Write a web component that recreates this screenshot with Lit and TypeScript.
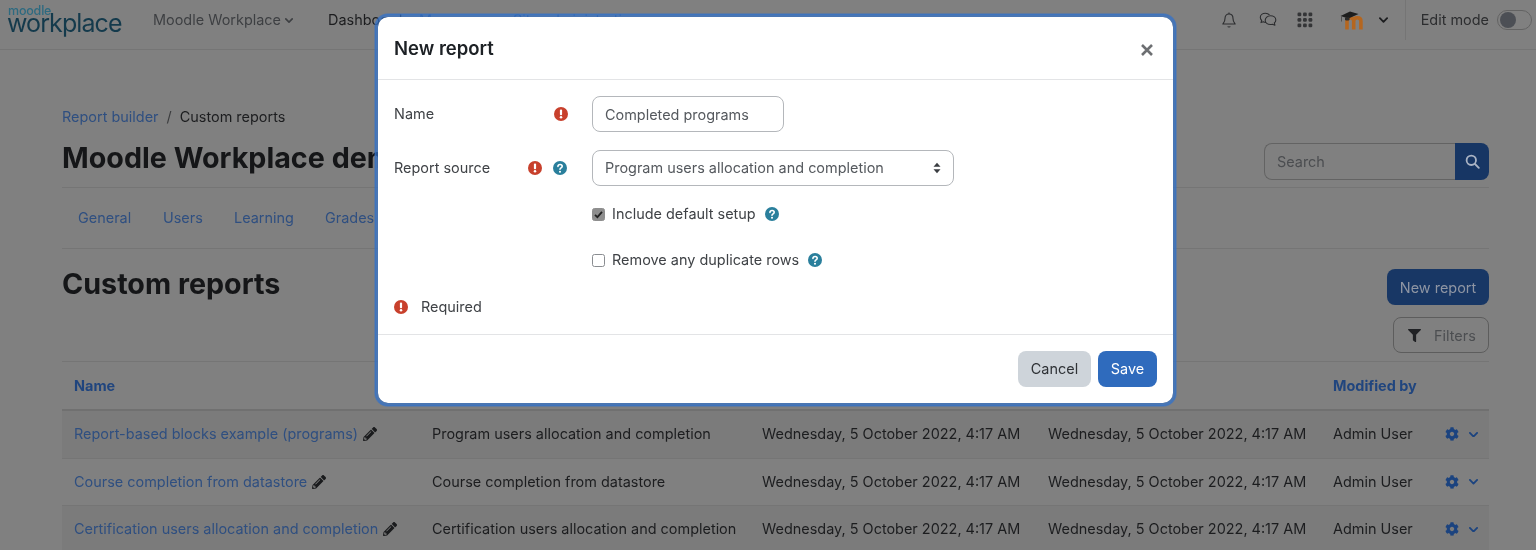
import { LitElement, html, css, svg } from "lit";
import { customElement } from "lit/decorators.js";

const GEAR = "M487.4 315.7l-42.6-24.6c4.3-23.2 4.3-47 0-70.2l42.6-24.6c4.9-2.8 7.1-8.6 5.5-14-11.1-35.6-30-67.8-54.7-94.6-3.8-4.1-10-5.1-14.8-2.3L380.8 110c-17.9-15.4-38.5-27.3-60.8-35.1V25.8c0-5.6-3.9-10.5-9.4-11.7-36.7-8.2-74.3-7.8-109.2 0-5.5 1.2-9.4 6.1-9.4 11.7V75c-22.2 7.9-42.8 19.8-60.8 35.1L88.7 85.5c-4.9-2.8-11-1.9-14.8 2.3-24.7 26.7-43.6 58.9-54.7 94.6-1.7 5.4.6 11.2 5.5 14L67.3 221c-4.3 23.2-4.3 47 0 70.2l-42.6 24.6c-4.9 2.8-7.1 8.6-5.5 14 11.1 35.6 30 67.8 54.7 94.6 3.8 4.1 10 5.1 14.8 2.3l42.6-24.6c17.9 15.4 38.5 27.3 60.8 35.1v49.2c0 5.6 3.9 10.5 9.4 11.7 36.7 8.2 74.3 7.8 109.2 0 5.5-1.2 9.4-6.1 9.4-11.7v-49.2c22.2-7.9 42.8-19.8 60.8-35.1l42.6 24.6c4.9 2.8 11 1.9 14.8-2.3 24.7-26.7 43.6-58.9 54.7-94.6 1.5-5.5-.7-11.3-5.6-14.1zM256 336c-44.1 0-80-35.9-80-80s35.9-80 80-80 80 35.9 80 80-35.9 80-80 80z";
const PENCIL = "M497.9 142.1l-46.1 46.1c-4.7 4.7-12.3 4.7-17 0l-111-111c-4.7-4.7-4.7-12.3 0-17l46.1-46.1c18.7-18.7 49.1-18.7 67.9 0l60.1 60.1c18.8 18.7 18.8 49.1 0 67.9zM284.2 99.8L21.6 362.4.4 483.9c-2.9 16.4 11.4 30.6 27.8 27.8l121.5-21.3 262.6-262.6c4.7-4.7 4.7-12.3 0-17l-111-111c-4.8-4.7-12.4-4.7-17.1 0zM124.1 339.9c-5.5-5.5-5.5-14.3 0-19.8l154-154c5.5-5.5 14.3-5.5 19.8 0s5.5 14.3 0 19.8l-154 154c-5.5 5.5-14.3 5.5-19.8 0zM88 424h48v36.3l-64.5 11.3-31.1-31.1L51.7 376H88v48z";
const FILTER = "M487.976 0H24.028C2.71 0-8.047 25.866 7.058 40.971L192 225.941V432c0 7.831 3.821 15.17 10.237 19.662l80 55.98C298.02 518.69 320 507.493 320 487.98V225.941l184.947-184.97C520.021 25.896 509.338 0 487.976 0z";

const chevron = (cls: string) => html`<svg class=${cls} viewBox="0 0 10 6" fill="none" stroke="currentColor" stroke-width="2" stroke-linecap="round" stroke-linejoin="round"><path d="M1 1l4 4 4-4" /></svg>`;
const errIcon = html`<svg class="ico14" viewBox="0 0 14 14"><circle cx="7" cy="7" r="7" fill="#c8402c" /><rect x="5.9" y="2.6" width="2.2" height="5.6" rx="1" fill="#fff" /><circle cx="7" cy="10.3" r="1.25" fill="#fff" /></svg>`;
const helpIcon = html`<svg class="ico14" viewBox="0 0 14 14"><circle cx="7" cy="7" r="7" fill="#2a7f9c" /><path d="M4.9 5.4c.1-1.2 1-1.9 2.2-1.9 1.2 0 2.1.8 2.1 1.8 0 1.6-2.2 1.5-2.2 3" fill="none" stroke="#fff" stroke-width="1.6" stroke-linecap="round" /><circle cx="7" cy="10.7" r="1.05" fill="#fff" /></svg>`;

const ROWS = [
  ["Report-based blocks example (programs)", "Program users allocation and completion"],
  ["Course completion from datastore", "Course completion from datastore"],
  ["Certification users allocation and completion", "Certification users allocation and completion"],
];
const DATE = "Wednesday, 5 October 2022, 4:17 AM";

@customElement("app-root")
export class AppRoot extends LitElement {
  static styles = css`
    :host {
      display: block;
      position: relative;
      height: 550px;
      overflow: hidden;
      background: #808080;
      color: #1c1d1f;
      font-family: Inter, "Liberation Sans", sans-serif;
      font-size: 14.45px;
      line-height: 22px;
    }
    * { box-sizing: border-box; }
    svg { display: block; flex: none; }
    .ico14 { width: 14px; height: 14px; }
    .soft { filter: blur(0.35px); }

    /* top bar */
    .top {
      height: 50px;
      border-bottom: 1px solid #757575;
      display: flex;
      align-items: flex-start;
      padding-left: 7px;
    }
    .logo { width: 146px; height: 40px; color: #12384a; }
    .logo .small {
      display: block; font-size: 12.5px; line-height: 12px; color: #2d6a80; margin-top: 5px; letter-spacing: -.2px; font-weight: 500; padding-left: 1px;
    }
    .logo .big {
      display: block; font-size: 25px; line-height: 20px; letter-spacing: -.9px; margin-top: -4px; color: #143a4c;
    }
    .brand { display: flex; align-items: center; gap: 4px; height: 40px; color: #3d3f42; width: 175px; }
    .chev-nav { width: 8px; height: 5px; }
    .nav { display: flex; height: 40px; align-items: center; color: #1c1d1f; }
    .nav a.d { width: 91px; }
    .nav a.m { width: 94px; color: #2f4f80; }
    .nav a.s { color: #2f4f80; }
    .right { margin-left: auto; display: flex; align-items: center; height: 40px; color: #2c2d2f; }
    .right .bell { width: 14px; height: 17px; margin-right: 23px; }
    .right .chat { width: 18px; height: 17px; margin-right: 20px; }
    .right .apps { width: 16px; height: 16px; margin-right: 27px; }
    .right .mlogo { width: 26px; height: 20px; margin-right: 13px; }
    .right .chev-user { width: 9px; height: 6px; margin-right: 17px; color: #1c1d1f; }
    .divider { width: 1px; height: 40px; background: #757575; margin-right: 15px; }
    .edit { margin-right: 8px; color: #2c2d2f; }
    .toggle {
      width: 35px; height: 20px; border-radius: 10px; border: 1px solid #636363; margin-right: 4px; padding: 1px 0 0 2px;
    }
    .toggle i { display: block; width: 16px; height: 16px; border-radius: 50%; background: #4c4f55; }

    /* page */
    main { padding: 0 47px 0 62px; }
    .crumbs { margin-top: 56px; display: flex; gap: 8px; height: 22px; align-items: center; }
    .crumbs a { color: #2f4f80; }
    .crumbs span { color: #3a3b3d; }
    .crumbs b { font-weight: 400; color: #1c1d1f; }
    .titlebar { display: flex; justify-content: space-between; align-items: center; height: 44px; margin-top: 8px; }
    h1 { margin: 0; font-size: 28.7px; line-height: 36px; font-weight: 700; color: #151618; white-space: nowrap; }
    .search { display: flex; width: 225px; height: 37px; margin-top: 6px; }
    .search .in {
      flex: 1; border: 1px solid #636363; border-right: 0; border-radius: 8px 0 0 8px; padding: 1px 12px 0; display: flex; align-items: center; color: #4b4d50;
    }
    .search .btn {
      width: 34px; background: #173664; border-radius: 0 8px 8px 0; display: flex; align-items: center; justify-content: center;
    }
    .search svg { width: 15px; height: 15px; }
    .tabs {
      margin-top: 7px; border-top: 1px solid #757575; border-bottom: 1px solid #757575; height: 62px; display: flex; align-items: center; padding-left: 16px; color: #2f4f80; padding-bottom: 1px;
    }
    .tabs a:nth-child(1) { width: 85px; }
    .tabs a:nth-child(2) { width: 71px; }
    .tabs a:nth-child(3) { width: 91px; }
    .headrow { display: flex; justify-content: space-between; margin-top: 20px; height: 84px; }
    .headrow h1 { margin-top: -3px; }
    .actions { display: flex; flex-direction: column; align-items: flex-end; gap: 12px; }
    .btn-new {
      width: 102px; height: 36px; padding-top: 1px; background: #183765; color: #8e95a3; border-radius: 8px; display: flex; align-items: center; justify-content: center;
    }
    .btn-filter {
      width: 96px; height: 36px; border: 1px solid #5d5d5d; border-radius: 8px; display: flex; align-items: center; gap: 13px; padding: 1px 0 0 14px; color: #4c4e51;
    }
    .btn-filter svg { width: 13px; height: 13px; color: #202124; }
    .table { margin-top: 8px; }
    .tr { display: grid; grid-template-columns: 358px 330px 286px 285px 112px 56px; }
    .thead { height: 50px; border-top: 1px solid #757575; border-bottom: 2px solid #707070; align-items: center; color: #20457e; font-weight: 700; }
    .td { padding-left: 12px; white-space: nowrap; display: flex; align-items: center; gap: 5px; }
    .row { height: 47.5px; border-bottom: 1px solid #757575; align-items: center; }
    .row.odd { background: #7b7b7b; }
    .row a { color: #2f4f80; }
    .pencil { width: 14px; height: 14px; color: #1a1b1d; }
    .gear { width: 14px; height: 14px; color: #1b437f; }
    .chev-act { width: 9px; height: 5.5px; color: #1b437f; }
    .row .act { gap: 10px; }

    /* dialog */
    .modal {
      position: absolute; left: 375px; top: 14px; width: 801px; height: 392px;
      border: 3px solid rgba(51, 114, 201, .7); border-radius: 13px; background: #fff; background-clip: padding-box; display: flex; flex-direction: column; color: #3f4246;
      box-shadow: 0 0 0 .75px rgba(51, 114, 201, .5);
    }
    .mhead {
      height: 63px; flex: none; border-bottom: 1px solid #e3e4e6; display: flex; align-items: center; justify-content: space-between; padding: 0 20px 0 16px;
    }
    .mhead h2 { margin: 0; font-size: 18.5px; font-weight: 600; color: #1d2125; }
    .mhead svg { width: 12px; height: 12px; margin-top: 4px; }
    .mbody { flex: 1; padding: 16px 16px 0; display: flex; flex-direction: column; }
    .frow { display: grid; grid-template-columns: 198px auto; }
    .frow.input { height: 36px; align-items: center; margin-bottom: 18px; }
    .frow.input.last { margin-bottom: 17px; }
    .frow.check { height: 22px; align-items: center; margin-bottom: 24px; }
    .lab { display: flex; align-items: center; gap: 11px; padding-right: 24px; }
    .lab.two { padding-right: 25px; }
    .lab span { margin-right: auto; }
    .field {
      height: 36px; border: 1px solid #b4b7bb; border-radius: 8px; display: flex; align-items: center; padding: 0 12px; color: #55595e;
    }
    .f-name { width: 192px; padding-top: 1px; }
    .f-src { width: 362px; justify-content: space-between; }
    .f-src svg { width: 8px; height: 12px; }
    .cb { display: flex; align-items: center; gap: 7px; }
    .box { width: 13px; height: 13px; border-radius: 2.5px; border: 1px solid #8a8d91; background: #fff; }
    .box.on { background: #8e8e8e; border-color: #8e8e8e; display: flex; align-items: center; justify-content: center; }
    .box svg { width: 11px; height: 11px; }
    .cb .h { margin-left: 2px; }
    .req { display: flex; align-items: center; gap: 13px; height: 22px; margin-top: 1px; }
    .mfoot {
      height: 69px; flex: none; border-top: 1px solid #e3e4e6; display: flex; justify-content: flex-end; align-items: center; gap: 7px; padding: 0 16px;
    }
    .b { height: 36px; border-radius: 8px; display: flex; align-items: center; justify-content: center; }
    .cancel { width: 73px; background: #ced4da; color: #2f3236; }
    .save { width: 59px; background: #2f6bbd; color: #fff; }
  `;

  render() {
    return html`
      <div class="soft">
      <header class="top">
        <div class="logo"><span class="small">moodle</span><span class="big">workplace</span></div>
        <div class="brand">Moodle Workplace ${chevron("chev-nav")}</div>
        <nav class="nav"><a class="d">Dashboard</a><a class="m">My courses</a><a class="s">Site administration</a></nav>
        <div class="right">
          <svg class="bell" viewBox="0 0 14 17" fill="none" stroke="currentColor" stroke-width="1.1" stroke-linejoin="round"><path d="M7 2c-2.6 0-4 2-4 4.4 0 3.4-1.6 4.6-2.2 5.6h12.4c-.6-1-2.2-2.2-2.2-5.6C11 4 9.600 2 7 2z"/><path d="M7 .6V2M5.800 14.300c.3 1 2.100 1 2.400 0"/></svg>
          <svg class="chat" viewBox="0 0 18 17" fill="none" stroke="currentColor" stroke-width="1.1" stroke-linejoin="round"><path d="M7 10.500c-1-.1-1.900-.3-2.600-.7l-2.400.8.700-2.100C1.900 7.700 1.300 6.500 1.300 5.300 1.300 3 3.600 1.200 6.400 1.200c1.700 0 3.200.7 4.100 1.700"/><path d="M11.500 3.800c3 0 5.300 1.800 5.300 4.100 0 1.200-.6 2.300-1.500 3l.6 2.300-2.500-1c-.6.2-1.200.3-1.900.3-3 0-5.300-1.900-5.300-4.200s2.300-4.500 5.300-4.500z"/></svg>
          <svg class="apps" viewBox="0 0 16 16" fill="#343537">
            ${[0.5, 6, 11.5].flatMap((y) => [0.5, 6, 11.5].map((x) => svg`<rect x=${x} y=${y} width="3.800" height="3.800" rx="1.300" />`))}
          </svg>
          <svg class="mlogo" viewBox="0 0 26 20"><path d="M7 19.500v-8.500c0-2.200 1.400-3.300 3.300-3.300s3.400 1.100 3.400 3.300v8.500M13.700 11c0-2.200 1.600-3.300 3.600-3.300s3.600 1.100 3.600 3.300v8.500" fill="none" stroke="#b5661f" stroke-width="3.600"/><path d="M.5 6 10 1.500 18.500 4 8.500 8.500z" fill="#1d1d1d"/><path d="M5 7.500v2.500c1.500.8 3 .8 4.500 0V7z" fill="#2a2a2a"/><path d="M1.500 6.500v5" stroke="#444" stroke-width=".8"/></svg>
          ${chevron("chev-user")}
          <div class="divider"></div>
          <span class="edit">Edit mode</span>
          <div class="toggle"><i></i></div>
        </div>
      </header>

      <main>
        <div class="crumbs"><a>Report builder</a><span>/</span><b>Custom reports</b></div>
        <div class="titlebar">
          <h1>Moodle Workplace demo</h1>
          <div class="search">
            <div class="in">Search</div>
            <div class="btn"><svg viewBox="0 0 15 15" fill="none" stroke="#a9b3c4" stroke-width="1.800" stroke-linecap="round"><circle cx="6.300" cy="6.300" r="4.700"/><path d="M10 10l3.800 3.800"/></svg></div>
          </div>
        </div>
        <div class="tabs"><a>General</a><a>Users</a><a>Learning</a><a>Grades</a></div>
        <div class="headrow">
          <h1>Custom reports</h1>
          <div class="actions">
            <div class="btn-new">New report</div>
            <div class="btn-filter"><svg viewBox="0 0 512 512" fill="currentColor"><path d=${FILTER} /></svg>Filters</div>
          </div>
        </div>
        <div class="table">
          <div class="tr thead">
            <div class="td">Name</div><div class="td"></div><div class="td"></div><div class="td"></div><div class="td">Modified by</div><div class="td"></div>
          </div>
          ${ROWS.map(
            (r, i) => html`<div class="tr row ${i % 2 === 0 ? "odd" : ""}">
              <div class="td"><a>${r[0]}</a><svg class="pencil" viewBox="0 0 512 512" fill="currentColor"><path d=${PENCIL} /></svg></div>
              <div class="td">${r[1]}</div>
              <div class="td">${DATE}</div>
              <div class="td">${DATE}</div>
              <div class="td">Admin User</div>
              <div class="td act"><svg class="gear" viewBox="0 0 512 512" fill="currentColor"><path d=${GEAR} /></svg>${chevron("chev-act")}</div>
            </div>`
          )}
        </div>
      </main>

      <div class="modal">
        <div class="mhead">
          <h2>New report</h2>
          <svg viewBox="0 0 12 12" fill="none" stroke="#6d6f72" stroke-width="2.600"><path d="M1 1l10 10M11 1L1 11"/></svg>
        </div>
        <div class="mbody">
          <div class="frow input">
            <div class="lab"><span>Name</span>${errIcon}</div>
            <div class="field f-name">Completed programs</div>
          </div>
          <div class="frow input last">
            <div class="lab two"><span>Report source</span>${errIcon}${helpIcon}</div>
            <div class="field f-src">Program users allocation and completion
              <svg viewBox="0 0 8 12" fill="#3a3d41"><path d="M4 .8 7.500 4.800H.5zM4 11.200.5 7.200h7z"/></svg>
            </div>
          </div>
          <div class="frow check">
            <div></div>
            <div class="cb"><div class="box on"><svg viewBox="0 0 11 11" fill="none" stroke="#222" stroke-width="1.800"><path d="M2 5.800 4.400 8.200 9 2.800"/></svg></div>Include default setup<span class="h">${helpIcon}</span></div>
          </div>
          <div class="frow check">
            <div></div>
            <div class="cb"><div class="box"></div>Remove any duplicate rows<span class="h">${helpIcon}</span></div>
          </div>
          <div class="req">${errIcon}Required</div>
        </div>
        <div class="mfoot">
          <div class="b cancel">Cancel</div>
          <div class="b save">Save</div>
        </div>
      </div>
      </div>
    `;
  }
}
